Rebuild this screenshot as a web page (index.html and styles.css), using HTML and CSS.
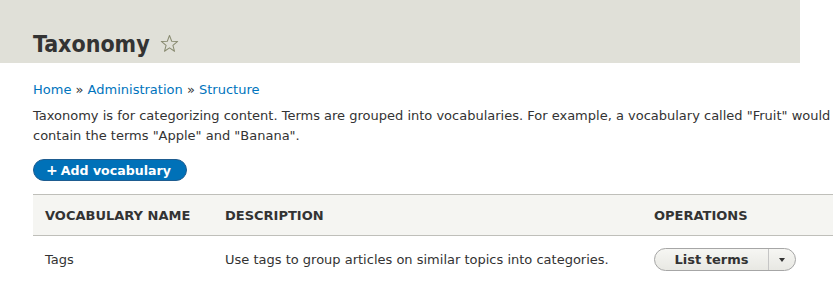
FILE: index.html
```
<!DOCTYPE html>
<html>
<head>
<meta charset="utf-8">
<link rel="stylesheet" href="styles.css">
</head>
<body>
<header class="page-header">
  <h1 class="page-title">Taxonomy
    <svg class="star" width="19" height="19" viewBox="0 0 20 20"><path d="M10 1.5 L12.3 7.6 L18.6 7.8 L13.6 11.9 L15.3 18.2 L10 14.6 L4.7 18.2 L6.4 11.9 L1.4 7.8 L7.7 7.6 Z" fill="none" stroke="#8a8c72" stroke-width="1.1" stroke-linejoin="round"/></svg>
  </h1>
</header>
<main class="content">
  <nav class="breadcrumb"><a href="#">Home</a> » <a href="#">Administration</a> » <a href="#">Structure</a></nav>
  <p class="help">Taxonomy is for categorizing content. Terms are grouped into vocabularies. For example, a vocabulary called "Fruit" would contain the terms "Apple" and "Banana".</p>
  <a class="button-action" href="#"><span class="plus">+</span>Add vocabulary</a>
  <table class="vocab-table">
    <thead>
      <tr><th class="col-name">Vocabulary name</th><th class="col-desc">Description</th><th class="col-ops">Operations</th></tr>
    </thead>
    <tbody>
      <tr><td>Tags</td><td>Use tags to group articles on similar topics into categories.</td><td>
        <div class="dropbutton"><span class="db-main">List terms</span><span class="db-toggle"><span class="tri"></span></span></div>
      </td></tr>
    </tbody>
  </table>
</main>
</body>
</html>
```
FILE: styles.css
```
html, body { margin: 0; padding: 0; }
body {
  font-family: "DejaVu Sans", sans-serif;
  font-size: 13px;
  color: #333;
  background: #fff;
  width: 833px;
  overflow: hidden;
}
.page-header {
  background: #e0e0d8;
  width: 800px;
  height: 63px;
  box-sizing: border-box;
  padding: 30px 0 0 33px;
}
.page-title {
  margin: 0;
  font-family: "DejaVu Sans Condensed", "DejaVu Sans", sans-serif;
  font-weight: bold;
  font-size: 23px;
  line-height: 28px;
  color: #333;
  display: flex;
  align-items: center;
  gap: 10px;
}
.star { display: block; margin-top: -1px; }
.content { padding: 0 0 0 33px; }
.breadcrumb { margin-top: 18px; line-height: 18px; color: #333; }
.breadcrumb a { color: #0074bd; text-decoration: none; }
.help { margin: 7px 0 0 0; line-height: 20px; }
.button-action {
  display: inline-flex;
  align-items: center;
  margin-top: 13px;
  height: 22px;
  box-sizing: border-box;
  padding: 0 15px 0 12px;
  background: #0071b8;
  border: 1px solid #1e5c90;
  border-radius: 20px;
  color: #fff;
  font-weight: bold;
  font-size: 12.6px;
  text-decoration: none;
}
.plus { margin-right: 3px; font-size: 14px; }
.vocab-table {
  margin-top: 13px;
  width: 800px;
  border-collapse: collapse;
}
.vocab-table th {
  background: #f5f5f2;
  border-top: 1px solid #bfbfba;
  border-bottom: 1px solid #bfbfba;
  text-align: left;
  text-transform: uppercase;
  font-weight: bold;
  font-size: 13px;
  height: 41px;
  padding: 0 12px;
  box-sizing: border-box;
  color: #333;
}
.col-name { width: 180px; }
.col-desc { width: 429px; }
.vocab-table td {
  height: 47px;
  padding: 0 12px;
  border-bottom: 1px solid #e6e4df;
}
.dropbutton {
  display: inline-flex;
  height: 23px;
  box-sizing: border-box;
  border: 1px solid #a6a6a6;
  border-radius: 12px;
  background: linear-gradient(#f6f6f3, #e8e8e3);
  overflow: hidden;
  vertical-align: middle;
}
.db-main {
  width: 113px;
  display: flex;
  align-items: center;
  justify-content: center;
  font-weight: bold;
  color: #333;
}
.db-toggle {
  width: 26px;
  border-left: 1px solid #c5c5c5;
  display: flex;
  align-items: center;
  justify-content: center;
}
.tri {
  width: 0; height: 0;
  border-left: 3.5px solid transparent;
  border-right: 3.5px solid transparent;
  border-top: 4px solid #333;
  margin-top: 1px;
}
```
